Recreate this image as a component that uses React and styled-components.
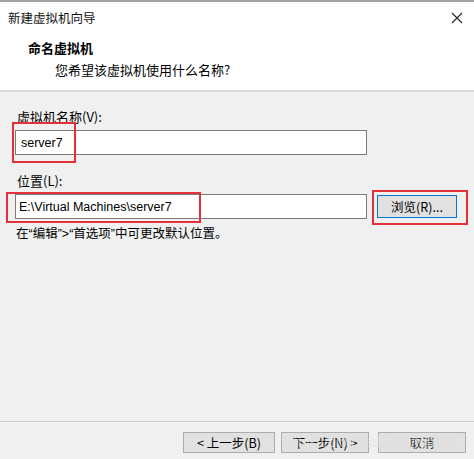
import React from 'react';
import styled, { createGlobalStyle } from 'styled-components';

const GlobalStyle = createGlobalStyle`
  html, body {
    margin: 0;
    padding: 0;
    background: #f0f0f0;
  }
  body {
    font-family: "Noto Sans", "Noto Sans CJK SC", sans-serif;
    font-size: 13px;
    color: #000;
  }
`;

const Window = styled.div`
  position: relative;
  width: 474px;
  height: 459px;
  box-sizing: border-box;
  border-top: 2px solid #a3a3a3;
  background: #f0f0f0;
  display: flex;
  flex-direction: column;
  overflow: hidden;
`;

const TitleBar = styled.div`
  height: 31px;
  background: #fff;
  display: flex;
  align-items: center;
  justify-content: space-between;
  padding: 0 11px 0 8px;
`;

const TitleText = styled.span`
  font-family: "Noto Sans CJK SC", sans-serif;
  font-size: 12.5px;
  line-height: 16px;
  color: #111;
`;

const Header = styled.div`
  background: #fff;
  height: 59px;
  padding: 6px 0 0 28px;
  box-sizing: border-box;
  border-bottom: 2px solid #d9d9d9;
`;

const HeaderTitle = styled.div`
  font-family: "Noto Sans CJK SC", sans-serif;
  font-weight: 700;
  font-size: 13px;
  line-height: 18px;
`;

const HeaderSub = styled.div`
  font-family: "Noto Sans CJK SC", sans-serif;
  font-size: 13px;
  line-height: 18px;
  margin: 4px 0 0 27px;
`;

const Content = styled.div`
  flex: 1;
  padding: 16px 0 0 15px;
`;

const Label = styled.div`
  font-family: "Noto Sans CJK SC", sans-serif;
  font-size: 13px;
  line-height: 18px;
  margin-top: ${(p) => p.$top || 0}px;
  padding-left: 2px;
`;

const Row = styled.div`
  display: flex;
  align-items: center;
  gap: 10px;
  margin-top: 4px;
`;

const TextField = styled.div`
  width: 352px;
  height: 25px;
  box-sizing: border-box;
  border: 1px solid #7a7a7a;
  background: #fff;
  display: flex;
  align-items: center;
  padding-left: ${(p) => p.$pad || 4}px;
  font-family: "Segoe UI", "Liberation Sans", sans-serif;
  font-size: 12.5px;
`;

const Button = styled.div`
  width: ${(p) => p.$w || 88}px;
  height: ${(p) => p.$h || 21}px;
  margin-left: ${(p) => p.$ml || 0}px;
  box-sizing: border-box;
  background: #e1e1e1;
  border: 1px solid ${(p) => (p.$focus ? '#0078d7' : '#adadad')};
  display: flex;
  align-items: center;
  justify-content: center;
  font-family: "Noto Sans CJK SC", sans-serif;
  font-size: 12.5px;
  color: ${(p) => (p.$dim ? '#333' : '#000')};
  white-space: pre;
`;

const Hint = styled.div`
  font-family: "Liberation Sans", "Noto Sans CJK SC", sans-serif;
  font-size: 12.5px;
  line-height: 18px;
  margin-top: 6px;
  padding-left: 1px;
`;

const Footer = styled.div`
  height: 38px;
  border-top: 1px solid #c8c8c8;
  box-shadow: inset 0 1px 0 #fafafa;
  display: flex;
  align-items: flex-start;
  justify-content: flex-end;
  padding: 10px 8px 0 0;
  box-sizing: border-box;
`;

const Mark = styled.div`
  position: absolute;
  left: ${(p) => p.$x}px;
  top: ${(p) => p.$y}px;
  width: ${(p) => p.$w}px;
  height: ${(p) => p.$h}px;
  box-sizing: border-box;
  border: 2px solid #e3303b;
  pointer-events: none;
`;

const Watermark = styled.div`
  position: absolute;
  left: 286px;
  top: 432px;
  font-family: "Liberation Sans", sans-serif;
  font-size: 14px;
  color: rgba(255, 255, 255, 0.5);
  text-shadow: 0 0 1px rgba(150, 150, 150, 0.3);
  pointer-events: none;
`;

function CloseIcon() {
  return (
    <svg width="12" height="12" viewBox="0 0 12 12">
      <path d="M1 1L11 11M11 1L1 11" stroke="#222" strokeWidth="1.1" fill="none" />
    </svg>
  );
}

export default function App() {
  return (
    <>
      <GlobalStyle />
      <Window>
        <TitleBar>
          <TitleText>新建虚拟机向导</TitleText>
          <CloseIcon />
        </TitleBar>
        <Header>
          <HeaderTitle>命名虚拟机</HeaderTitle>
          <HeaderSub>您希望该虚拟机使用什么名称?</HeaderSub>
        </Header>
        <Content>
          <Label>虚拟机名称(V):</Label>
          <Row>
            <TextField $pad={5}>server7</TextField>
          </Row>
          <Label $top={17}>位置(L):</Label>
          <Row>
            <TextField $pad={3}>E:\Virtual Machines\server7</TextField>
            <Button $w={80} $h={23} $focus>浏览(R)...</Button>
          </Row>
          <Hint>在“编辑”&gt;“首选项”中可更改默认位置。</Hint>
        </Content>
        <Footer>
          <Button $w={92}>&lt; 上一步(B)</Button>
          <Button $ml={6}>下一步(N) &gt;</Button>
          <Button $ml={9} $dim>取消</Button>
        </Footer>
        <Mark $x={12} $y={120} $w={64} $h={41} />
        <Mark $x={6} $y={190} $w={195} $h={31} />
        <Mark $x={372} $y={188} $w={96} $h={35} />
        <Watermark>https://blog.csdn.net/fguiu0</Watermark>
      </Window>
    </>
  );
}
